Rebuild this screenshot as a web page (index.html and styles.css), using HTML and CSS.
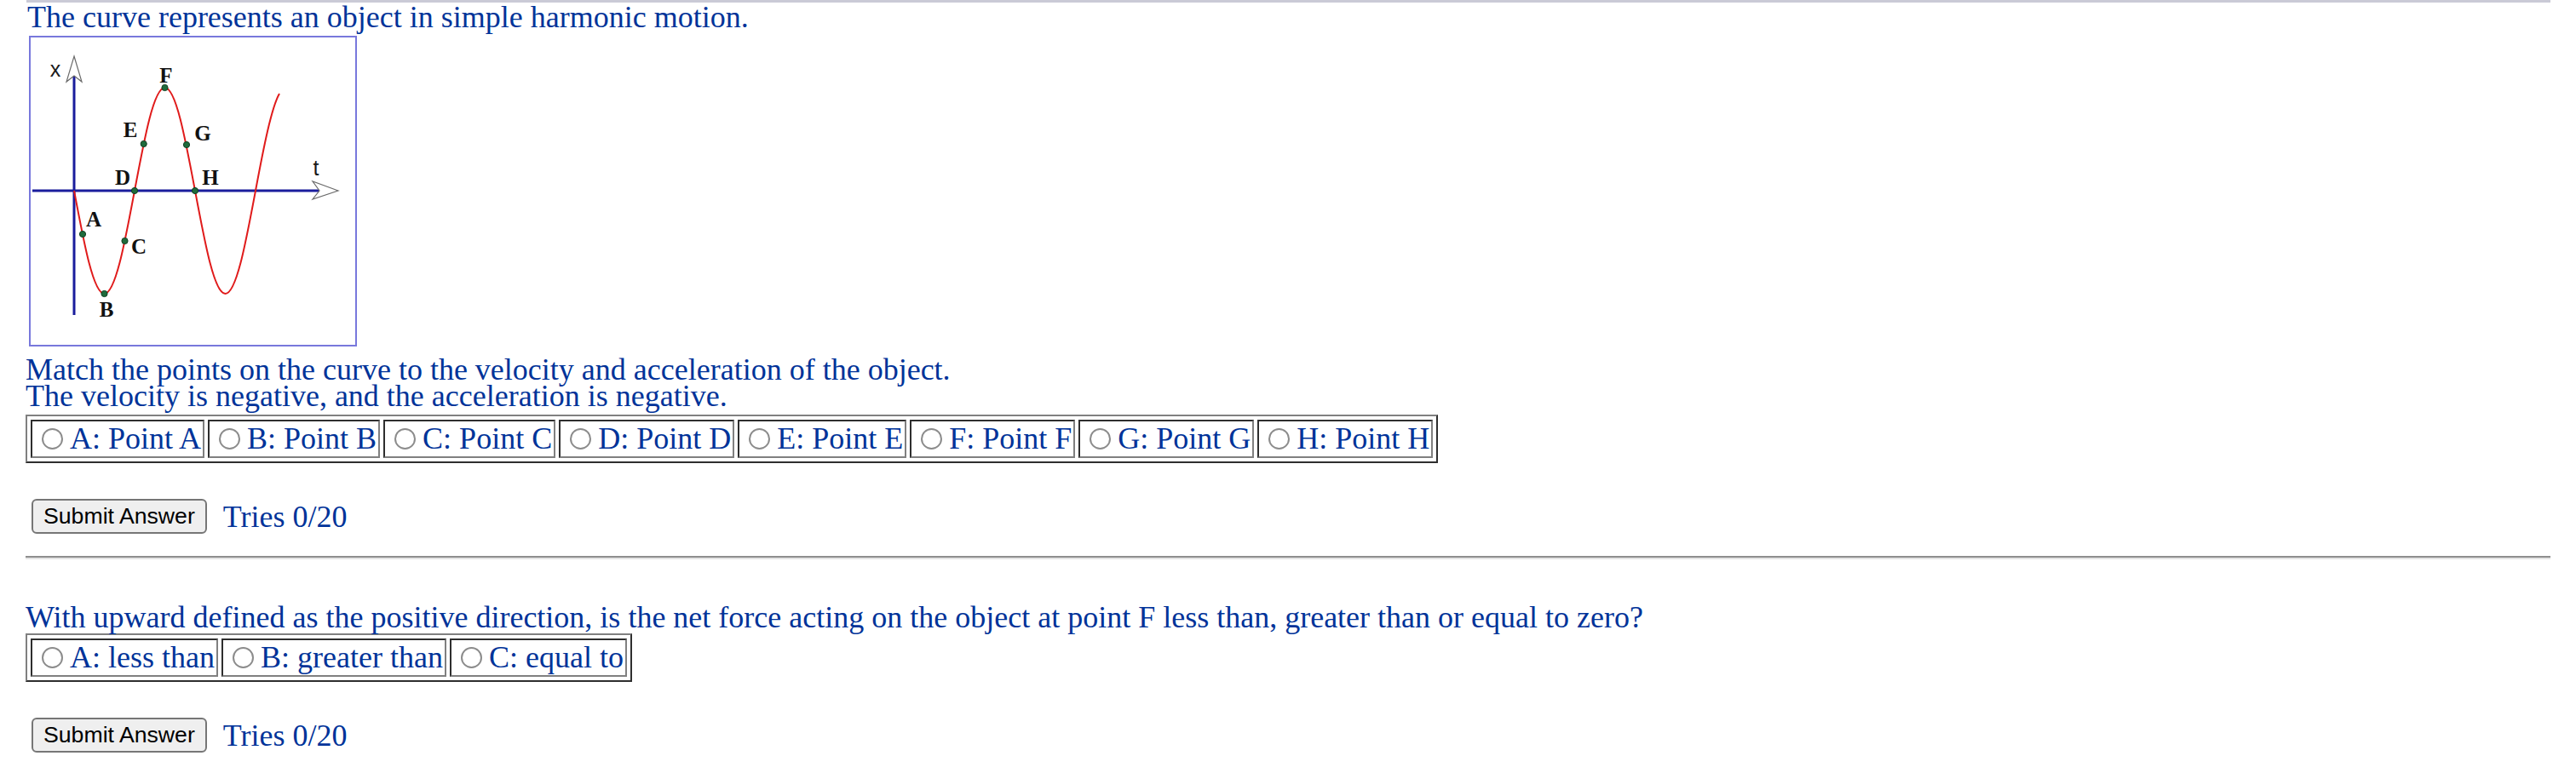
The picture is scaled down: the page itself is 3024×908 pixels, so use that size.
FILE: index.html
```html
<!DOCTYPE html>
<html lang="en">
<head>
    <meta charset="utf-8">
    <title>Simple harmonic motion</title>
    <link rel="stylesheet" href="styles.css">
</head>
<body>
<div class="page">
    <div class="rule-top"></div>

    <section class="problem">
        <p class="stem">The curve represents an object in simple harmonic motion.</p>

        <div class="figure">
            <svg width="381" height="361" viewBox="0 0 381 361">
                <!-- axes -->
                <line class="axis" x1="51" y1="44" x2="51" y2="326"/>
                <line class="axis" x1="2" y1="180" x2="340" y2="180"/>
                <path class="arrow" d="M51 22 L60 52 L51 45 L42 52 Z"/>
                <path class="arrow" d="M361 180 L331 169 L339 180 L331 190 Z"/>
                <text class="axis-name" x="29" y="46">x</text>
                <text class="axis-name" x="335" y="162">t</text>

                <!-- x = -A sin(wt) -->
                <path class="curve" d="M51 180
                    C62.9 243.5 73.7 301 86.5 301
                    C99.3 301 110.1 243.5 122 180
                    C133.9 116.5 144.7 59 157.5 59
                    C170.3 59 181.1 116.5 193 180
                    C204.9 243.5 215.7 301 228.5 301
                    C241.3 301 252.1 243.5 264 180
                    C273.3 130 282.7 82 292 66"/>

                <circle class="dot" cx="61" cy="231" r="3.6"/>
                <circle class="dot" cx="86.5" cy="301" r="3.6"/>
                <circle class="dot" cx="110.5" cy="239" r="3.6"/>
                <circle class="dot" cx="122" cy="180" r="3.6"/>
                <circle class="dot" cx="132.7" cy="125" r="3.6"/>
                <circle class="dot" cx="157.5" cy="59" r="3.6"/>
                <circle class="dot" cx="183" cy="126" r="3.6"/>
                <circle class="dot" cx="193" cy="180" r="3.6"/>

                <text class="pt" x="74" y="222">A</text>
                <text class="pt" x="89" y="328">B</text>
                <text class="pt" x="127" y="254">C</text>
                <text class="pt" x="108" y="173">D</text>
                <text class="pt" x="117" y="117">E</text>
                <text class="pt" x="159" y="53">F</text>
                <text class="pt" x="202" y="121">G</text>
                <text class="pt" x="211" y="173">H</text>
            </svg>
        </div>

        <p class="prompt prompt-two">Match the points on the curve to the velocity and acceleration of the object.<br>The velocity is negative, and the acceleration is negative.</p>

        <table class="choices choices-first">
            <tr>
                <td><label><input type="radio" name="q1">A: Point A</label></td>
                <td><label><input type="radio" name="q1">B: Point B</label></td>
                <td><label><input type="radio" name="q1">C: Point C</label></td>
                <td><label><input type="radio" name="q1">D: Point D</label></td>
                <td><label><input type="radio" name="q1">E: Point E</label></td>
                <td><label><input type="radio" name="q1">F: Point F</label></td>
                <td><label><input type="radio" name="q1">G: Point G</label></td>
                <td><label><input type="radio" name="q1">H: Point H</label></td>
            </tr>
        </table>

        <div class="submit-row">
            <button class="submit" type="button">Submit Answer</button>
            <span class="tries">Tries 0/20</span>
        </div>
    </section>

    <hr class="divider">

    <section class="problem">
        <p class="prompt prompt-one">With upward defined as the positive direction, is the net force acting on the object at point F less than, greater than or equal to zero?</p>

        <table class="choices choices-second">
            <tr>
                <td><label><input type="radio" name="q2">A: less than</label></td>
                <td><label><input type="radio" name="q2">B: greater than</label></td>
                <td><label><input type="radio" name="q2">C: equal to</label></td>
            </tr>
        </table>

        <div class="submit-row">
            <button class="submit" type="button">Submit Answer</button>
            <span class="tries">Tries 0/20</span>
        </div>
    </section>
</div>
</body>
</html>
```

FILE: styles.css
```css
html, body {
    margin: 0;
    padding: 0;
    background: #ffffff;
}

body {
    font-family: "Liberation Serif", "Times New Roman", serif;
    font-size: 36px;
    color: #003399;
}

.page {
    padding: 0 30px;
}

.rule-top {
    border-top: 3px solid #cacad6;
    margin-left: 1px;
}

p {
    margin: 0;
}

.stem {
    line-height: 34px;
    padding-left: 2px;
}

.figure {
    width: 381px;
    height: 361px;
    margin: 5px 0 0 4px;
    border: 2px solid #7878dc;
    background: #ffffff;
}

.figure svg {
    display: block;
}

.axis {
    stroke: #1a1d9c;
    stroke-width: 3;
}

.arrow {
    fill: #ffffff;
    stroke: #6a6a6a;
    stroke-width: 1.2;
    stroke-linejoin: miter;
}

.axis-name {
    font-family: "Liberation Sans", Arial, sans-serif;
    font-size: 25px;
    fill: #1a1a1a;
    text-anchor: middle;
}

.curve {
    fill: none;
    stroke: #e01b1b;
    stroke-width: 2;
}

.dot {
    fill: #1f6b3c;
    stroke: #123f22;
    stroke-width: 1;
}

.pt {
    font-family: "Liberation Serif", "Times New Roman", serif;
    font-weight: bold;
    font-size: 25px;
    fill: #111111;
    text-anchor: middle;
}

.prompt {
    line-height: 31px;
}

.prompt-two {
    margin-top: 12px;
}

.prompt-one {
    margin-top: 53px;
}

.choices {
    border-collapse: separate;
    border-spacing: 4px;
    border: 2px solid;
    border-color: #808080 #2e2e2e #2e2e2e #808080;
}

.choices-first {
    margin-top: 6px;
}

.choices-second {
    margin-top: 3px;
}

.choices td {
    padding: 2px;
    border: 2px solid;
    border-color: #2e2e2e #808080 #808080 #2e2e2e;
    line-height: 37px;
    white-space: nowrap;
}

.choices label {
    display: block;
}

.choices input {
    -webkit-appearance: none;
    appearance: none;
    width: 25px;
    height: 25px;
    margin: 0 8px 0 9px;
    border: 2px solid #8c8c8c;
    border-radius: 50%;
    background: #ffffff;
    box-sizing: border-box;
    vertical-align: -1px;
}

.submit-row {
    display: flex;
    align-items: center;
    margin-top: 42px;
}

.submit {
    height: 41px;
    padding: 0 12px;
    margin: 0 0 0 7px;
    border: 2px solid #767676;
    border-radius: 6px;
    background: #efefef;
    color: #000000;
    font-family: "Liberation Sans", Arial, sans-serif;
    font-size: 26.67px;
}

.tries {
    margin-left: 19px;
    line-height: 40px;
}

.divider {
    margin: 26px 0 0 0;
    height: 0;
    border: 0;
    border-top: 2px solid #8e8e8e;
    border-bottom: 2px solid #e3e3e3;
}
```
